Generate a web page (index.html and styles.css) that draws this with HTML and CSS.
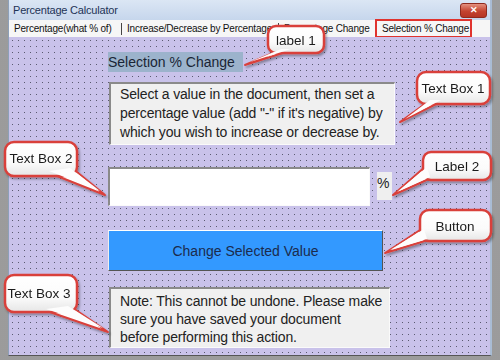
FILE: index.html
```html
<!DOCTYPE html>
<html lang="en">
<head>
    <meta charset="UTF-8">
    <title>Percentage Calculator</title>
    <link rel="stylesheet" href="styles.css">
</head>
<body>
<div class="screen">
    <div class="window">
        <div class="titlebar">
            <span class="title">Percentage Calculator</span>
            <span class="close">&#x2715;</span>
        </div>
        <div class="tabs">
            <span class="tab tab-1">Percentage(what % of)</span>
            <span class="sep"></span>
            <span class="tab tab-2">Increase/Decrease by Percentage</span>
            <span class="sep"></span>
            <span class="tab tab-3">Percentage Change</span>
            <span class="tab active">Selection % Change</span>
        </div>
        <div class="form">
            <div class="label1">Selection % Change</div>
            <div class="textbox info">Select a value in the document, then set a<br>percentage value (add "-" if it's negative) by<br>which you wish to increase or decrease by.</div>
            <div class="input-row">
                <div class="textbox value-input"></div>
                <div class="pct">%</div>
            </div>
            <button class="change-btn">Change Selected Value</button>
            <div class="textbox note">Note: This cannot be undone. Please make<br>sure you have saved your document<br>before performing this action.</div>
        </div>
    </div>

    <!-- annotation callouts over the form -->
    <svg class="callouts" width="500" height="360" viewBox="0 0 500 360">
        <defs>
            <linearGradient id="bubble" x1="0" y1="0" x2="0" y2="1">
                <stop offset="0" stop-color="#ffffff"/>
                <stop offset="0.6" stop-color="#fbfbfb"/>
                <stop offset="1" stop-color="#e6e6e6"/>
            </linearGradient>
            <filter id="shadow" x="-20%" y="-20%" width="150%" height="160%">
                <feDropShadow dx="1.5" dy="2" stdDeviation="1.2" flood-color="#000" flood-opacity="0.35"/>
            </filter>
        </defs>

        <g class="callout" filter="url(#shadow)">
            <polygon class="tail" points="280,50 292,50 245,65"/>
            <rect class="box" x="268" y="26" width="56" height="27" rx="8"/>
            <polygon class="tail-fill" points="281,49 291,49 250,62"/>
            <text x="296" y="45">label 1</text>
        </g>

        <g class="callout" filter="url(#shadow)">
            <polygon class="tail" points="429,101 442,101 400,122"/>
            <rect class="box" x="417" y="72" width="73" height="32" rx="9"/>
            <polygon class="tail-fill" points="430,100 441,100 405,119"/>
            <text x="453" y="93">Text Box 1</text>
        </g>

        <g class="callout" filter="url(#shadow)">
            <polygon class="tail" points="47,172 72,168 105,195"/>
            <rect class="box" x="5" y="142" width="72" height="34" rx="9"/>
            <polygon class="tail-fill" points="49,171 70,168 100,191"/>
            <text x="41" y="163">Text Box 2</text>
        </g>

        <g class="callout" filter="url(#shadow)">
            <polygon class="tail" points="426,166 431,178 393,195"/>
            <rect class="box" x="423" y="152" width="68" height="28" rx="8"/>
            <polygon class="tail-fill" points="427,167 430,177 397,192"/>
            <text x="457" y="171">Label 2</text>
        </g>

        <g class="callout" filter="url(#shadow)">
            <polygon class="tail" points="423,228 428,240 385,253"/>
            <rect class="box" x="420" y="210" width="71" height="31" rx="9"/>
            <polygon class="tail-fill" points="424,229 427,239 390,250"/>
            <text x="455" y="231">Button</text>
        </g>

        <g class="callout" filter="url(#shadow)">
            <polygon class="tail" points="44,310 70,306 108,332"/>
            <rect class="box" x="5" y="275" width="72" height="37" rx="9"/>
            <polygon class="tail-fill" points="46,309 68,306 103,328"/>
            <text x="39" y="298">Text Box 3</text>
        </g>
    </svg>
</div>
</body>
</html>
```

FILE: styles.css
```css
body {
    margin: 0;
    font-family: "Liberation Sans", Arial, sans-serif;
}
.screen {
    position: relative;
    width: 500px;
    height: 360px;
    overflow: hidden;
    background-color: #d8d8d8;
    background-image: radial-gradient(#7a7a7a 0.6px, transparent 0.9px);
    background-size: 2px 2px;
}
.window {
    margin: 0 8px;
    height: 355px;
    border-left: 1px solid #8da0b8;
    border-right: 2px solid #a9bcd4;
    border-bottom: 1px solid #555;
    display: flex;
    flex-direction: column;
}
.titlebar {
    height: 20px;
    display: flex;
    align-items: center;
    justify-content: space-between;
    padding: 0 3px 0 4px;
    background: linear-gradient(#dbe6f4, #c6d6ec);
}
.title {
    font-size: 11px;
    letter-spacing: -0.2px;
    color: #1e3356;
}
.close {
    width: 25px;
    height: 13px;
    line-height: 13px;
    text-align: center;
    font-size: 9px;
    font-weight: bold;
    color: #fff;
    border: 1px solid #8e2a1e;
    border-radius: 3px;
    background: linear-gradient(#e4917f, #c4432f 55%, #b53524);
}
.tabs {
    height: 17px;
    display: flex;
    align-items: center;
    padding-left: 5px;
    background: #f6f6f6;
    font-size: 10px;
    letter-spacing: -0.2px;
    color: #111;
    white-space: nowrap;
}
.tab-1 {
    width: 107px;
}
.tab-2 {
    width: 151px;
    padding-left: 5px;
}
.tab-3 {
    width: 89px;
    padding-left: 5px;
}
.sep {
    width: 1px;
    height: 12px;
    background: #444;
}
.tab.active {
    width: 88px;
    height: 15px;
    line-height: 15px;
    margin-left: 2px;
    padding-left: 5px;
    border: 2px solid #e0332e;
    border-bottom-width: 1px;
    align-self: flex-end;
}
.form {
    flex: 1;
    padding: 15px 0 0 99px;
    background-color: #c9c2ea;
    background-image: radial-gradient(circle at 0.5px 0.5px, #5a5a70 0.5px, transparent 0.7px);
    background-size: 6px 6px;
    background-position: 3px 3px;
    display: flex;
    flex-direction: column;
    align-items: flex-start;
    font-size: 14px;
    color: #222;
}
.label1 {
    width: 135px;
    height: 20px;
    line-height: 20px;
    background: #9cb3cc;
    color: #1a2535;
}
.textbox {
    box-sizing: border-box;
    background: #f0f0f0;
    border-top: 2px solid #8a8a8a;
    border-left: 2px solid #8a8a8a;
    border-right: 1px solid #fafafa;
    border-bottom: 1px solid #fafafa;
    line-height: 19px;
    padding-left: 9px;
    letter-spacing: -0.15px;
}
.info {
    margin-top: 10px;
    margin-left: 1px;
    width: 286px;
    height: 63px;
    padding-top: 1px;
}
.input-row {
    margin-top: 22px;
    display: flex;
    align-items: flex-start;
}
.value-input {
    width: 262px;
    height: 39px;
    background: #fff;
}
.pct {
    margin: 5px 0 0 7px;
    width: 15px;
    height: 28px;
    background: #efefef;
    line-height: 22px;
}
.change-btn {
    margin-top: 24px;
    width: 275px;
    height: 41px;
    font: inherit;
    color: #1b2b4d;
    background: #3399ff;
    border: 1px solid #555;
    border-top-color: #fff;
    border-left-color: #eee;
    padding: 0;
}
.note {
    margin-top: 16px;
    margin-left: 1px;
    width: 281px;
    height: 61px;
    padding-top: 3px;
    line-height: 18px;
}
.callouts {
    position: absolute;
    left: 0;
    top: 0;
}
.callout .tail {
    fill: #fff;
    stroke: #d9413b;
    stroke-width: 2;
    stroke-linejoin: round;
}
.callout .box {
    fill: url(#bubble);
    stroke: #d9413b;
    stroke-width: 2.5;
}
.callout .tail-fill {
    fill: #fdfdfd;
}
.callout text {
    font-family: "Liberation Sans", Arial, sans-serif;
    font-size: 13.5px;
    fill: #1a1a1a;
    text-anchor: middle;
}
```
